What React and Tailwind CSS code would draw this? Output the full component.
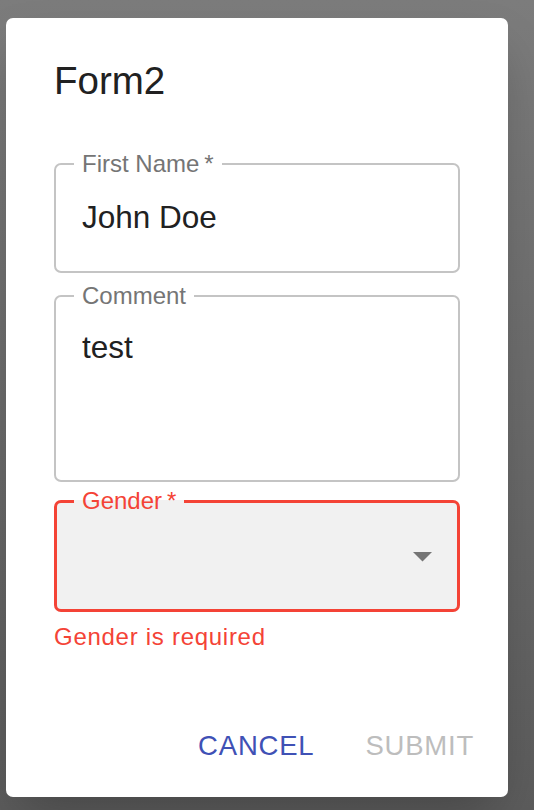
export default function App() {
  return (
    <div
      className="min-h-[810px] w-full bg-gradient-to-b from-[#7c7c7c] to-[#5c5c5c] pt-[18px] pl-[6px]"
      style={{ fontFamily: '"Liberation Sans", Arial, sans-serif' }}
    >
      <div className="w-[502px] h-[779px] bg-white rounded-[7px] shadow-2xl flex flex-col">
        {/* Title */}
        <h1 className="pl-[48px] pt-[41px] text-[38.5px] leading-[44px] text-[#212121]">Form2</h1>

        <div className="flex flex-col px-[48px] mt-[47px]">
          {/* First Name */}
          <fieldset className="border-2 border-[#c4c4c4] rounded-[7px] h-[123px] pl-[18px] pr-[24px] min-w-0">
            <legend className="px-[8px] text-[24px] leading-[28px] text-[#757575]">
              First Name{'\u2009'}*
            </legend>
            <div className="pl-[8px] pt-[21px] text-[31.5px] leading-[36px] text-[#212121]">John Doe</div>
          </fieldset>

          {/* Comment */}
          <fieldset className="mt-[9px] border-2 border-[#c4c4c4] rounded-[7px] h-[200px] pl-[18px] pr-[24px] min-w-0">
            <legend className="px-[8px] text-[24px] leading-[28px] text-[#757575]">Comment</legend>
            <div className="pl-[8px] pt-[19px] text-[31.5px] leading-[36px] text-[#212121]">test</div>
          </fieldset>

          {/* Gender */}
          <fieldset className="mt-[5px] border-[3px] border-[#f44336] bg-[#f1f1f1] rounded-[7px] h-[125px] pl-[17px] pr-[25px] min-w-0">
            <legend className="px-[8px] text-[24px] leading-[28px] text-[#f44336]">
              Gender{'\u2009'}*
            </legend>
            <div className="flex justify-end pt-[37px]">
              <svg width="19" height="10" viewBox="0 0 19 10">
                <path d="M0 0 L19 0 L9.5 9.5 Z" fill="#757575" />
              </svg>
            </div>
          </fieldset>
          <p className="mt-[11px] text-[24px] leading-[28px] text-[#f44336] tracking-[0.03em]">Gender is required</p>
        </div>

        {/* Actions */}
        <div className="mt-auto mb-[35px] flex justify-end items-center gap-[51px] pr-[34px]">
          <button className="text-[27.5px] leading-[32px] text-[#3f51b5] tracking-[0.02857em]">CANCEL</button>
          <button className="text-[27.5px] leading-[32px] text-[#bdbdbd] tracking-[0.02857em]" disabled>SUBMIT</button>
        </div>
      </div>
    </div>
  );
}
